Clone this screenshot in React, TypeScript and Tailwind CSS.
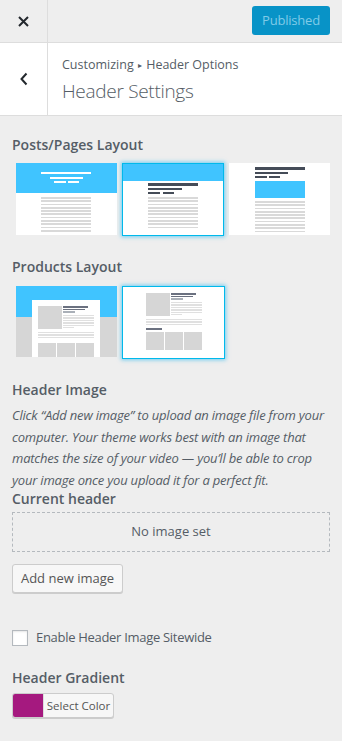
import React from "react";

const BLUE = "bg-[#40c4ff]";

function GrayLines({ n, w, gap = "gap-[1.6px]" }: { n: number; w: string; gap?: string }) {
  return (
    <div className={`flex flex-col ${gap} ${w}`}>
      {Array.from({ length: n }).map((_, i) => (
        <div key={i} className="h-[1.7px] bg-[#d9d9d9]" />
      ))}
    </div>
  );
}

function Thumb1() {
  return (
    <div className="w-[101px] h-[72px] bg-white flex flex-col">
      <div className={`h-[30px] ${BLUE} flex flex-col items-center pt-[9px] gap-[2.5px]`}>
        <div className="w-[50px] h-[2px] bg-white" />
        <div className="w-[33px] h-[2px] bg-white" />
        <div className="flex gap-[2px]">
          <div className="w-[12px] h-[2px] bg-white" />
          <div className="w-[11px] h-[2px] bg-white" />
        </div>
      </div>
      <div className="flex justify-center pt-[4px]">
        <GrayLines n={11} w="w-[50px]" />
      </div>
    </div>
  );
}

function Thumb2() {
  return (
    <div className="w-[103px] h-[73px] bg-white border border-[#00b9eb] shadow-[0_0_4px_1px_rgba(30,180,240,0.6)] flex flex-col">
      <div className={`h-[17px] ${BLUE}`} />
      <div className="flex flex-col items-center pt-[2px]">
        <div className="w-[50px] flex flex-col gap-[2px]">
          <div className="w-[50px] h-[2.5px] bg-[#454c58]" />
          <div className="w-[34px] h-[2.5px] bg-[#454c58]" />
          <div className="flex gap-[3px]">
            <div className="w-[12px] h-[2px] bg-[#454c58]" />
            <div className="w-[11px] h-[2px] bg-[#454c58]" />
          </div>
        </div>
        <div className="pt-[3px]">
          <GrayLines n={10} w="w-[50px]" />
        </div>
      </div>
    </div>
  );
}

function Thumb3() {
  return (
    <div className="w-[101px] h-[72px] bg-white flex flex-col items-center pt-[4px]">
      <div className="w-[50px] flex flex-col gap-[2px]">
        <div className="w-[50px] h-[2.5px] bg-[#454c58]" />
        <div className="w-[33px] h-[2.5px] bg-[#454c58]" />
        <div className="flex gap-[2px]">
          <div className="w-[12px] h-[2px] bg-[#454c58]" />
          <div className="w-[11px] h-[2px] bg-[#454c58]" />
        </div>
        <div className={`h-[17px] ${BLUE} mt-[1px]`} />
      </div>
      <div className="pt-[3px]">
        <GrayLines n={10} w="w-[50px]" />
      </div>
    </div>
  );
}

function ProductContent() {
  return (
    <div className="w-[56px] flex flex-col">
      <div className="flex gap-[1px]">
        <div className="w-[24px] h-[23px] bg-[#d6d6d6]" />
        <div className="flex-1 flex flex-col gap-[1.3px]">
          <div className="w-[25px] h-[1.6px] bg-[#6b7180]" />
          <div className="w-[22px] h-[1.2px] bg-[#6b7180]" />
          <div className="w-[12px] h-[1.2px] bg-[#aab0b8]" />
          <div className="h-[1.2px] bg-[#e0e0e0] mt-[1px]" />
          <div className="h-[1.2px] bg-[#e0e0e0]" />
          <div className="h-[1.2px] bg-[#e0e0e0]" />
          <div className="h-[1.2px] bg-[#e0e0e0]" />
          <div className="h-[1.2px] bg-[#e0e0e0]" />
          <div className="w-[11px] h-[1.2px] bg-[#e0e0e0]" />
        </div>
      </div>
      <div className="flex flex-col gap-[1.3px] mt-[3px]">
        <div className="h-[1.2px] bg-[#e0e0e0]" />
        <div className="h-[1.2px] bg-[#e0e0e0]" />
        <div className="h-[1.2px] bg-[#e0e0e0]" />
      </div>
      <div className="w-[16px] h-[1.6px] bg-[#6b7180] mt-[3px]" />
      <div className="flex gap-[1px] mt-[2px]">
        <div className="flex-1 h-[18px] bg-[#d6d6d6]" />
        <div className="flex-1 h-[18px] bg-[#d6d6d6]" />
        <div className="flex-1 h-[18px] bg-[#d6d6d6]" />
      </div>
    </div>
  );
}

function PThumb1() {
  return (
    <div className="w-[101px] h-[71px] flex flex-col overflow-hidden relative">
      <div className={`h-[31px] ${BLUE}`} />
      <div className="flex-1 bg-[#d6d6d6]" />
      <div className="absolute left-[16px] top-[14px] w-[68px] h-[60px] bg-white flex justify-center pt-[6px]">
        <ProductContent />
      </div>
    </div>
  );
}

function PThumb2() {
  return (
    <div className="w-[103px] h-[73px] bg-white border border-[#00b9eb] shadow-[0_0_4px_1px_rgba(30,180,240,0.6)] flex justify-center pt-[6px]">
      <ProductContent />
    </div>
  );
}

export default function App() {
  return (
    <div
      className="w-[342px] h-[741px] bg-[#eeeeee] overflow-hidden text-[#555d66]"
      style={{ fontFamily: '"Open Sans", "Noto Sans", sans-serif' }}
    >
      {/* Top bar */}
      <div className="h-[43px] flex border-b border-[#dddddd]">
        <div className="w-[48px] border-r border-[#dddddd] flex items-center justify-center">
          <svg width="11" height="11" viewBox="0 0 11 11">
            <path d="M1 1L10 10M10 1L1 10" stroke="#23282d" strokeWidth="2" />
          </svg>
        </div>
        <div className="flex-1 flex justify-end pt-[6px] pr-[12px]">
          <div className="w-[78px] h-[29px] rounded-[3px] bg-[#0893c7] text-[#80cbe8] text-[13px] tracking-[-0.2px] flex items-center justify-center">
            Published
          </div>
        </div>
      </div>

      {/* Section header */}
      <div className="h-[73px] bg-white flex border-b border-[#dddddd]">
        <div className="w-[48px] border-r border-[#dddddd] flex items-center justify-center">
          <svg width="10" height="14" viewBox="0 0 10 14">
            <path d="M7.5 1.5L2.5 7L7.5 12.5" stroke="#23282d" strokeWidth="2" fill="none" />
          </svg>
        </div>
        <div className="pl-[14px] pt-[13px]">
          <div className="text-[12.5px] leading-[18px] text-[#555d66]">
            Customizing <span className="text-[8px] align-[1px] mx-[1px]">▸</span> Header Options
          </div>
          <div className="text-[19px] leading-[26px] font-light tracking-[-0.3px] text-[#555d66] mt-[4px]">
            Header Settings
          </div>
        </div>
      </div>

      {/* Content */}
      <div className="px-[12px]">
        <div className="text-[14px] font-semibold leading-[20px] mt-[19px]">Posts/Pages Layout</div>
        <div className="flex items-start gap-[5px] mt-[8px] pl-[4px]">
          <Thumb1 />
          <Thumb2 />
          <Thumb3 />
        </div>

        <div className="text-[14px] font-semibold leading-[20px] mt-[21px]">Products Layout</div>
        <div className="flex items-start gap-[5px] mt-[9px] pl-[4px]">
          <PThumb1 />
          <PThumb2 />
        </div>

        <div className="text-[14px] font-semibold leading-[20px] mt-[21px]">Header Image</div>
        <div className="w-[318px] text-[13px] italic leading-[21.7px] mt-[5px] tracking-[-0.2px] text-[#555d66]">
          Click “Add new image” to upload an image file from your computer. Your theme works best with an image
          that matches the size of your video — you’ll be able to crop your image once you upload it for a perfect
          fit.
        </div>
        <div className="text-[14px] font-semibold leading-[20px] mt-[-3px]">Current header</div>
        <div className="mt-[3px] h-[40px] border border-dashed border-[#b4b9be] flex items-center justify-center text-[13px] text-[#555d66]">
          No image set
        </div>
        <div className="mt-[12px] w-[111px] h-[29px] rounded-[3px] border border-[#cccccc] bg-[#f7f7f7] shadow-[0_1px_0_#cccccc] flex items-center justify-center text-[13px] text-[#555555]">
          Add new image
        </div>

        <div className="flex items-center mt-[35px]">
          <div className="w-[16px] h-[16px] border border-[#b4b9be] bg-white shadow-[inset_0_1px_2px_rgba(0,0,0,0.1)]" />
          <div className="ml-[8px] text-[13px] tracking-[-0.3px] text-[#555d66]">Enable Header Image Sitewide</div>
        </div>

        <div className="text-[14px] font-semibold leading-[20px] mt-[21px]">Header Gradient</div>
        <div className="mt-[5px] w-[102px] h-[25px] rounded-[3px] border border-[#cccccc] bg-[#f7f7f7] shadow-[0_1px_0_#cccccc] flex overflow-hidden">
          <div className="w-[30px] h-full bg-[#a5197f]" />
          <div className="flex-1 flex items-center justify-center text-[11.5px] text-[#555555] border-l border-[#dddddd]">
            Select Color
          </div>
        </div>
      </div>
    </div>
  );
}
